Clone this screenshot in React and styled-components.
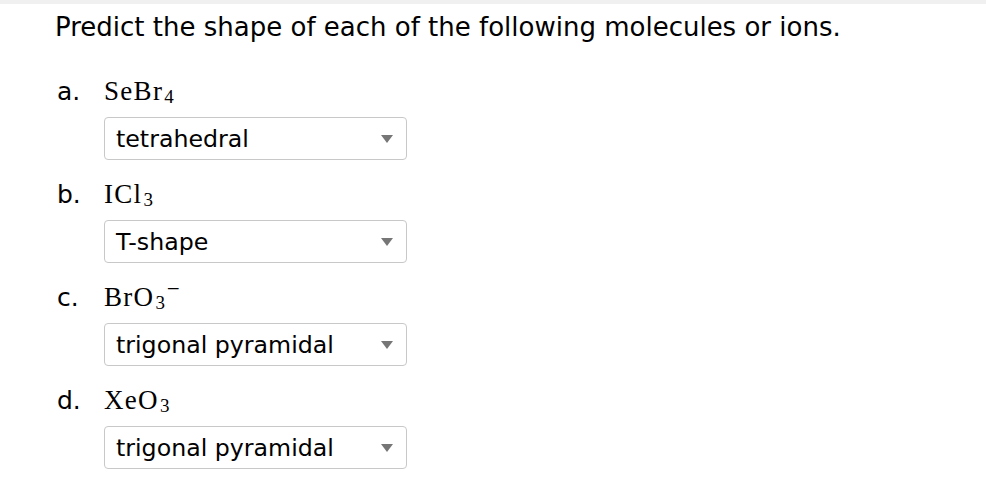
import React from 'react';
import styled, { createGlobalStyle } from 'styled-components';

const GlobalStyle = createGlobalStyle`
  html, body {
    margin: 0;
    padding: 0;
    background: #fff;
  }
  body {
    font-family: "DejaVu Sans", Verdana, sans-serif;
    color: #000;
  }
`;

const TopStrip = styled.div`
  height: 4px;
  background: #f0f0f0;
`;

const Page = styled.div`
  padding: 7px 0 0 55px;
`;

const Title = styled.p`
  margin: 0;
  font-size: 26px;
  line-height: 32px;
`;

const List = styled.div`
  margin-top: 32px;
`;

const Item = styled.div`
  margin-bottom: 18px;
`;

const Header = styled.div`
  display: flex;
  align-items: baseline;
  height: 32px;
  line-height: 32px;
`;

const Letter = styled.span`
  width: 47px;
  padding-left: 2px;
  font-size: 25px;
`;

const Formula = styled.span`
  font-family: "Liberation Serif", "Times New Roman", serif;
  font-size: 27px;
  letter-spacing: 1.3px;

  sub {
    font-size: 19px;
    vertical-align: -3px;
    line-height: 0;
    letter-spacing: 0;
    margin-left: 1px;
  }
  sup {
    font-family: "DejaVu Serif", serif;
    font-size: 17px;
    vertical-align: 12px;
    line-height: 0;
    margin-left: 1px;
  }
`;

const Select = styled.div`
  margin: 10px 0 0 49px;
  width: 303px;
  height: 43px;
  box-sizing: border-box;
  border: 1px solid #c8c8c8;
  border-radius: 4px;
  display: flex;
  align-items: center;
  justify-content: space-between;
  padding: 0 13px 0 11px;
  font-size: 23.7px;
`;

const Arrow = styled.span`
  width: 0;
  height: 0;
  border-left: 6.5px solid transparent;
  border-right: 6.5px solid transparent;
  border-top: 8px solid #767676;
`;

const items = [
  { letter: 'a.', base: 'SeBr', sub: '4', value: 'tetrahedral' },
  { letter: 'b.', base: 'ICl', sub: '3', value: 'T-shape' },
  { letter: 'c.', base: 'BrO', sub: '3', sup: '−', value: 'trigonal pyramidal' },
  { letter: 'd.', base: 'XeO', sub: '3', value: 'trigonal pyramidal' },
];

export default function App() {
  return (
    <>
      <GlobalStyle />
      <TopStrip />
      <Page>
        <Title>Predict the shape of each of the following molecules or ions.</Title>
        <List>
          {items.map((item) => (
            <Item key={item.letter}>
              <Header>
                <Letter>{item.letter}</Letter>
                <Formula>
                  {item.base}
                  <sub>{item.sub}</sub>
                  {item.sup && <sup>{item.sup}</sup>}
                </Formula>
              </Header>
              <Select>
                <span>{item.value}</span>
                <Arrow />
              </Select>
            </Item>
          ))}
        </List>
      </Page>
    </>
  );
}
